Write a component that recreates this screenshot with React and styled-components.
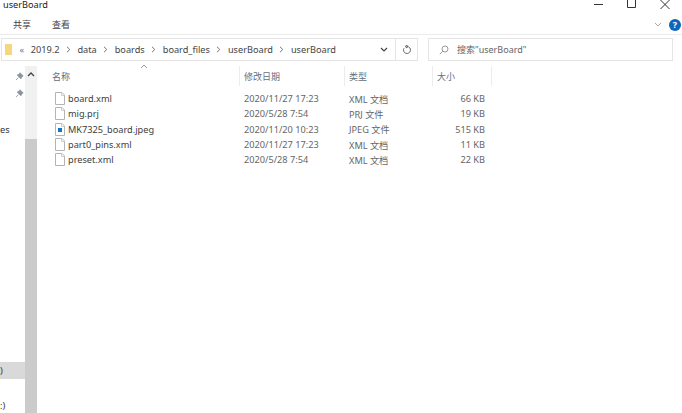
import React from "react";
import styled, { createGlobalStyle } from "styled-components";

const Global = createGlobalStyle`
  html, body { margin: 0; padding: 0; background: #fff; }
  body { font-family: "Noto Sans", "Noto Sans CJK SC", sans-serif; }
  #root { width: 682px; height: 413px; overflow: hidden; }
`;

const Window = styled.div`
  width: 682px; height: 413px; display: flex; flex-direction: column; overflow: hidden;
  background: #fff; color: #3c3c3c; font-size: 9.2px;
`;
const TitleBar = styled.div`
  height: 10px; flex: none; display: flex; align-items: center; justify-content: space-between;
  padding-left: 3px; font-size: 9.2px; line-height: 10px; color: #222;
`;
const Controls = styled.div`
  display: flex; align-items: center; gap: 24px; padding-right: 12px; margin-top: -2px;
`;
const TabBar = styled.div`
  height: 25px; flex: none; display: flex; align-items: center; gap: 21px; padding: 5px 0 0 13px;
  box-sizing: border-box; border-bottom: 1px solid #ececec; position: relative;
`;
const Tab = styled.span`
  font-size: 9px; color: #444; font-family: "Noto Sans CJK SC", sans-serif;
`;
const TabRight = styled.div`
  margin-left: auto; display: flex; align-items: center; gap: 7px; padding-right: 1px;
`;
const Help = styled.span`
  width: 12px; height: 12px; border-radius: 50%; background: #0f66b8; color: #fff; font-size: 9px; font-weight: 700;
  display: flex; align-items: center; justify-content: center;
`;
const NavRow = styled.div`
  flex: none; display: flex; gap: 10px; padding: 3px 9px 0 1px; height: 25px; box-sizing: border-box;
`;
const Field = styled.div`
  height: 23px; box-sizing: border-box; border: 1px solid #e4e4e4; display: flex; align-items: center; color: #444;
`;
const AddressBar = styled(Field)`
  width: 417px; flex: none; font-size: 9.2px;
`;
const Crumbs = styled.div`
  flex: 1; display: flex; align-items: center; padding-left: 2px; gap: 6.5px; min-width: 0; white-space: nowrap;
`;
const FieldBtn = styled.div`
  height: 100%; flex: none; width: ${p => p.$w}px; display: flex; align-items: center; justify-content: center;
  border-left: ${p => (p.$line ? "1px solid #e4e4e4" : "none")}; box-sizing: border-box;
`;
const SearchBox = styled(Field)`
  flex: 1; gap: 8px; padding-left: 10px; color: #666; font-size: 9px;
`;
const Content = styled.div`
  flex: 1; display: flex; min-height: 0; margin-top: 6px;
`;
const Sidebar = styled.div`
  width: 25px; flex: none; position: relative; display: flex; flex-direction: column; overflow: hidden; font-size: 9.2px;
`;
const PinSlot = styled.div`
  height: 17px; flex: none; display: flex; align-items: center; justify-content: flex-end; padding-right: 1px;
`;
const NavText = styled.div`
  height: 17px; flex: none; display: flex; align-items: center; white-space: nowrap; box-sizing: border-box;
  margin-top: ${p => p.$top || 0}px; background: ${p => (p.$sel ? "#d9d9d9" : "transparent")};
  color: #333;
`;
const ScrollBar = styled.div`
  width: 12px; flex: none; background: #f1f1f1; display: flex; flex-direction: column;
`;
const ScrollArrow = styled.div`
  height: 16px; flex: none; display: flex; align-items: center; justify-content: center;
`;
const ScrollGap = styled.div`
  height: 57px; flex: none;
`;
const ScrollThumb = styled.div`
  flex: 1; background: #cbcbcb;
`;
const Main = styled.div`
  flex: 1; display: flex; flex-direction: column; min-width: 0; padding-left: 1px; position: relative;
`;
const SortCaret = styled.svg`
  position: absolute; left: 103px; top: -2px;
`;
const Row = styled.div`
  display: grid; grid-template-columns: 202px 105px 88px 59px; align-items: center;
`;
const HeadRow = styled(Row)`
  height: 20px; margin-bottom: 5px; font-family: "Noto Sans CJK SC", sans-serif; font-size: 9px; color: #5f6f80;
`;
const HeadCell = styled.div`
  height: 100%; display: flex; align-items: center; box-sizing: border-box;
  padding-left: ${p => p.$pad}px; border-right: 1px solid #ececec;
`;
const FileRow = styled(Row)`
  height: 15.3px; color: #666;
`;
const NameCell = styled.div`
  display: flex; align-items: center; gap: 3px; padding-left: 17px; color: #404040;
`;
const Cell = styled.div`
  padding-left: 4px; white-space: nowrap;
`;
const SizeCell = styled.div`
  text-align: right; padding-right: 7px; white-space: nowrap;
`;

const FileIcon = ({ image }) => (
  <svg width="10" height="13" viewBox="0 0 10 13" style={{ flex: "none" }}>
    <path d="M.5.5H7L9.5 3V12.5H.5Z" fill="#fff" stroke="#b4b4b4" />
    <path d="M6.5.5V3.5H9.5" fill="none" stroke="#cfcfcf" />
    {image && <rect x="3" y="5" width="4" height="4" fill="#1273c9" />}
  </svg>
);
const Pin = () => (
  <svg width="9" height="9" viewBox="0 0 9 9">
    <path d="M5 .8 8.2 4 7 4.6 5.9 6.8 2.2 3.1 4.4 2ZM3.4 5.6 1 8" fill="#8b949c" stroke="#8b949c" strokeWidth=".8" />
  </svg>
);
const Sep = () => (
  <svg width="5" height="7" viewBox="0 0 5 7"><path d="M1 .8 3.8 3.5 1 6.2" fill="none" stroke="#777" /></svg>
);

const files = [
  ["board.xml", "2020/11/27 17:23", "XML 文档", "66 KB"],
  ["mig.prj", "2020/5/28 7:54", "PRJ 文件", "19 KB"],
  ["MK7325_board.jpeg", "2020/11/20 10:23", "JPEG 文件", "515 KB", true],
  ["part0_pins.xml", "2020/11/27 17:23", "XML 文档", "11 KB"],
  ["preset.xml", "2020/5/28 7:54", "XML 文档", "22 KB"],
];
const crumbs = ["2019.2", "data", "boards", "board_files", "userBoard", "userBoard"];

export default function App() {
  return (
    <Window>
      <Global />
      <TitleBar>
        <span>userBoard</span>
        <Controls>
          <svg width="9" height="8" viewBox="0 0 9 8"><path d="M0 4.5H9" stroke="#333" /></svg>
          <svg width="9" height="8" viewBox="0 0 9 8"><path d="M.5 0V7.5H8.5V0" fill="none" stroke="#333" /></svg>
          <svg width="10" height="9" viewBox="0 0 10 9"><path d="M.5 0 9.5 9M9.5 0 .5 9" stroke="#333" /></svg>
        </Controls>
      </TitleBar>
      <TabBar>
        <Tab>共享</Tab>
        <Tab>查看</Tab>
        <TabRight>
          <svg width="8" height="6" viewBox="0 0 8 6"><path d="M1 1 4 4 7 1" fill="none" stroke="#aaa" /></svg>
          <Help>?</Help>
        </TabRight>
      </TabBar>
      <NavRow>
        <AddressBar>
          <Crumbs>
            <svg width="7" height="11" viewBox="0 0 7 11" style={{ flex: "none", marginLeft: 1 }}><path d="M0 0H7V11H0Z" fill="#f5d77e" /></svg>
            <span style={{ color: "#777", marginLeft: 1 }}>«</span>
            {crumbs.map((c, i) => (
              <React.Fragment key={i}>
                <span>{c}</span>
                {i < crumbs.length - 1 && <Sep />}
              </React.Fragment>
            ))}
          </Crumbs>
          <FieldBtn $w={22}>
            <svg width="8" height="6" viewBox="0 0 8 6"><path d="M1 1 4 4 7 1" fill="none" stroke="#444" strokeWidth="1.2" /></svg>
          </FieldBtn>
          <FieldBtn $w={22} $line>
            <svg width="10" height="10" viewBox="0 0 10 10"><path d="M5 1.5A3.5 3.5 0 1 1 2 3.2M5 0V3L3.2 1.5Z" fill="none" stroke="#666" /></svg>
          </FieldBtn>
        </AddressBar>
        <SearchBox>
          <svg width="10" height="10" viewBox="0 0 10 10"><circle cx="6" cy="4" r="3" fill="none" stroke="#999" /><path d="M3.8 6.2 .8 9.2" stroke="#999" /></svg>
          <span style={{ fontFamily: '"Noto Sans", "Noto Sans CJK SC", sans-serif' }}>搜索"userBoard"</span>
        </SearchBox>
      </NavRow>
      <Content>
        <Sidebar>
          <PinSlot style={{ marginTop: 2 }}><Pin /></PinSlot>
          <PinSlot><Pin /></PinSlot>
          <NavText $top={19}>es</NavText>
          <NavText $top={224} $sel>)</NavText>
          <NavText $top={18}>:)</NavText>
        </Sidebar>
        <ScrollBar>
          <ScrollArrow>
            <svg width="8" height="6" viewBox="0 0 8 6"><path d="M1 5 4 2 7 5" fill="none" stroke="#444" strokeWidth="1.4" /></svg>
          </ScrollArrow>
          <ScrollGap />
          <ScrollThumb />
        </ScrollBar>
        <Main>
          <SortCaret width="8" height="5" viewBox="0 0 8 5"><path d="M1 4 4 1 7 4" fill="none" stroke="#999" /></SortCaret>
          <HeadRow>
            <HeadCell $pad={14}>名称</HeadCell>
            <HeadCell $pad={4}>修改日期</HeadCell>
            <HeadCell $pad={4}>类型</HeadCell>
            <HeadCell $pad={4}>大小</HeadCell>
          </HeadRow>
          {files.map(f => (
            <FileRow key={f[0]}>
              <NameCell><FileIcon image={f[4]} />{f[0]}</NameCell>
              <Cell>{f[1]}</Cell>
              <Cell>{f[2]}</Cell>
              <SizeCell>{f[3]}</SizeCell>
            </FileRow>
          ))}
        </Main>
      </Content>
    </Window>
  );
}
